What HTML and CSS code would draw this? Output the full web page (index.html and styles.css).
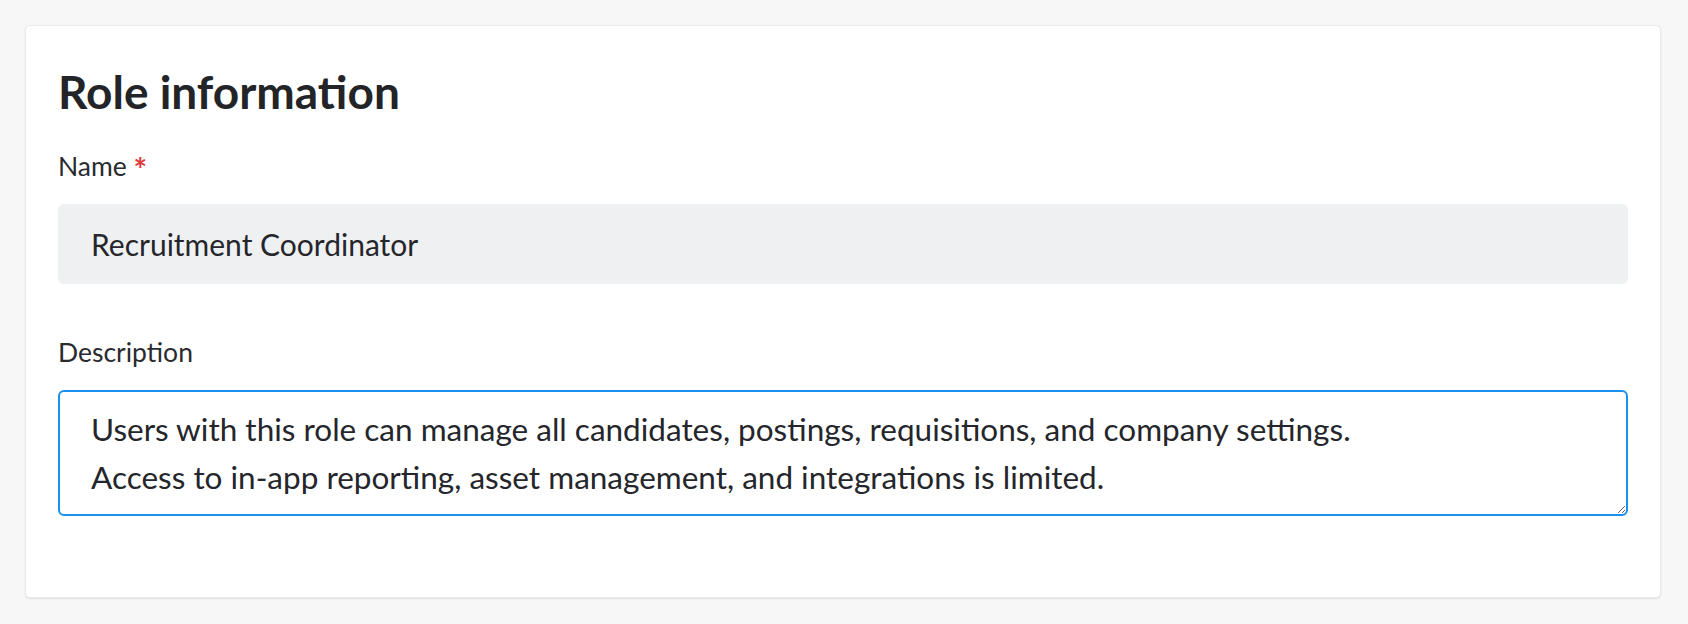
FILE: index.html
```html
<!DOCTYPE html>
<html lang="en">
<head>
<meta charset="utf-8">
<title>Role information</title>
<link rel="stylesheet" href="styles.css">
</head>
<body>
<main class="page">
  <section class="card">
    <h1 class="card-title">Role information</h1>
    <div class="field">
      <label class="field-label" for="role-name">Name <span class="required">*</span></label>
      <input class="text-input" id="role-name" type="text" value="Recruitment Coordinator" readonly>
    </div>
    <div class="field field-last">
      <label class="field-label" for="role-desc">Description</label>
      <textarea class="text-area" id="role-desc" readonly>Users with this role can manage all candidates, postings, requisitions, and company settings.
Access to in-app reporting, asset management, and integrations is limited.</textarea>
    </div>
  </section>
</main>
</body>
</html>
```
FILE: styles.css
```css
* { box-sizing: border-box; }
html, body { margin: 0; padding: 0; }
body {
  background: #f7f7f7;
  font-family: Lato, "Open Sans", sans-serif;
  color: #25262b;
}
.page {
  padding: 25px 27px 25px 25px;
}
.card {
  background: #ffffff;
  border: 1px solid #ebebeb;
  border-radius: 5px;
  box-shadow: 0 1px 2px rgba(0, 0, 0, 0.10);
  padding: 39px 32px 81px 32px;
}
.card-title {
  margin: 0 0 31px 0;
  font-size: 46px;
  line-height: 54px;
  font-weight: 700;
  color: #232428;
}
.field {
  display: flex;
  flex-direction: column;
  gap: 22px;
  margin-bottom: 52px;
}
.field-last { margin-bottom: 0; }
.field-label {
  font-size: 26.5px;
  line-height: 32px;
  color: #2a2b2f;
}
.required {
  color: #e0393b;
  font-size: 32px;
  font-weight: 700;
  line-height: 0;
  vertical-align: -6px;
}
.text-input {
  display: block;
  width: 100%;
  height: 80px;
  border: none;
  border-radius: 6px;
  background: #eff0f2;
  padding: 0 33px;
  font-family: Lato, "Open Sans", sans-serif;
  font-size: 30px;
  color: #25262b;
  outline: none;
}
.text-area {
  display: block;
  width: 100%;
  height: 126px;
  border: 2px solid #1a90ef;
  border-radius: 6px;
  background: #ffffff;
  padding: 13px 31px;
  font-family: Lato, "Open Sans", sans-serif;
  font-size: 31.5px;
  line-height: 48px;
  color: #25262b;
  outline: none;
  overflow: hidden;
  resize: vertical;
}
```
